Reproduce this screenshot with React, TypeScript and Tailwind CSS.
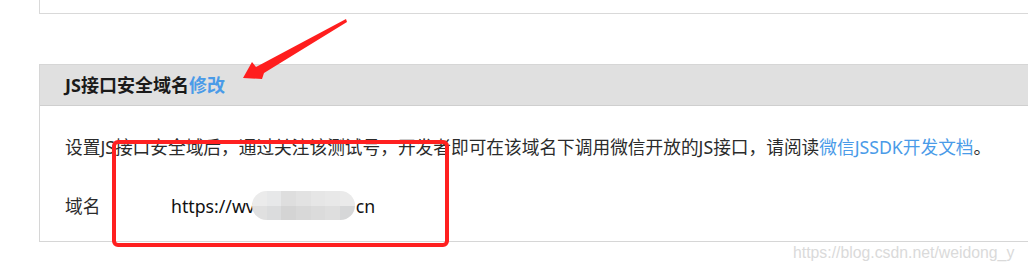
import React from 'react';

const blurCells = [
  ['#ebebeb', '#e7e8e9', '#dedede', '#e2e2e2', '#e6e6e6', '#e8e8e8', '#eaeaea'],
  ['#e0e0e0', '#dbdcdd', '#d4d4d4', '#d8d8d8', '#dbdbdb', '#dedede', '#d6d7d8'],
];

function Blurred() {
  return (
    <span className="inline-flex flex-col w-[103px] h-[29px] rounded-[15px] overflow-hidden -ml-[3px] mr-[1px]">
      {blurCells.map((row, i) => (
        <span key={i} className="flex flex-1">
          {row.map((c, j) => (
            <span key={j} className="flex-1" style={{ backgroundColor: c }} />
          ))}
        </span>
      ))}
    </span>
  );
}

export default function App() {
  return (
    <div
      className="relative w-[1028px] h-[272px] overflow-hidden bg-white text-[#333]"
      style={{ fontFamily: '"Noto Sans", "Noto Sans CJK SC", sans-serif' }}
    >
      {/* previous panel (cut off) */}
      <div className="ml-[39px] h-[14px] border-l border-b border-[#d9d9d9]" />

      {/* JS interface panel */}
      <div className="ml-[39px] mt-[50px] border-l border-t border-b border-[#d6d6d6]">
        <div className="h-[41px] bg-[#e0e0e0] border-b border-[#cfcfcf] flex items-center pl-[25px]">
          <h3 className="text-[18px] font-bold text-[#1a1a1a] leading-none">
            JS接口安全域名<a href="#" className="text-[#4a9be8]">修改</a>
          </h3>
        </div>
        <div className="pl-[25px] pt-[29px] pb-[21px] text-[17.7px] leading-[24px]">
          <p className="text-[#2b2b2b] whitespace-nowrap">
            设置JS接口安全域后，通过关注该测试号，开发者即可在该域名下调用微信开放的JS接口，请阅读
            <a href="#" className="text-[#4a9be8]">微信JSSDK开发文档</a>。
          </p>
          <div className="flex items-center mt-[32px]">
            <span className="w-[106px] text-[#2b2b2b]">域名</span>
            <span className="flex items-center text-[#111]">
              https://wv
              <Blurred />
              cn
            </span>
          </div>
        </div>
      </div>

      {/* annotations */}
      <div className="absolute left-[112px] top-[140px] w-[337px] h-[107px] border-[4px] border-[#ff2020] rounded-[6px]" />
      <svg className="absolute left-0 top-0" width="1028" height="272" viewBox="0 0 1028 272">
        <polygon
          points="346,19 347,22 264,73 262,79 243,78 252,62 256,67"
          fill="#ff1e1e"
        />
      </svg>

      <div
        className="absolute left-[793px] top-[244px] text-[15.8px] text-[#dadada] leading-[18px]"
        style={{ fontFamily: '"Liberation Sans", Arial, sans-serif' }}
      >
        https://blog.csdn.net/weidong_y
      </div>
    </div>
  );
}
